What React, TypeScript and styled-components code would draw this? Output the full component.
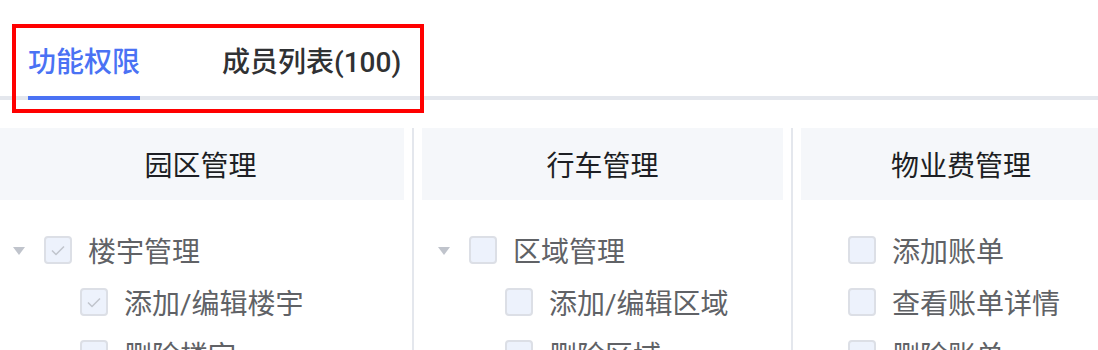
import React from "react";
import styled, { createGlobalStyle } from "styled-components";

const GlobalStyle = createGlobalStyle`
  body {
    margin: 0;
    background: #ffffff;
    font-family: Roboto, "Noto Sans CJK SC", "Noto Sans", sans-serif;
  }
`;

const StyledPage = styled.div`
  position: relative;
  width: 1098px;
  height: 350px;
  overflow: hidden;
`;

const StyledTabList = styled.div`
  display: flex;
  gap: 82px;
  padding-left: 28px;
  border-bottom: 4px solid #e4e7ed;
`;

const StyledTab = styled.div<{ $active?: boolean }>`
  display: flex;
  align-items: center;
  height: 72px;
  margin-top: 24px;
  margin-bottom: -4px;
  border-bottom: 4px solid ${({ $active }) => ($active ? "#4a72f4" : "transparent")};
  font-size: 28px;
  font-weight: 500;
  color: ${({ $active }) => ($active ? "#4a72f4" : "#303133")};
  white-space: nowrap;
`;

const StyledHighlight = styled.div`
  position: absolute;
  left: 12px;
  top: 24px;
  width: 412px;
  height: 89px;
  box-sizing: border-box;
  border: 4px solid #ff0000;
  pointer-events: none;
`;

const StyledColumns = styled.div`
  display: flex;
  margin-top: 28px;
  height: 222px;
`;

const StyledColumn = styled.div<{ $width: number; $offset?: number }>`
  flex: none;
  width: ${({ $width }) => $width}px;
  margin-left: ${({ $offset }) => $offset ?? 0}px;
`;

const StyledDivider = styled.div`
  flex: none;
  width: 2px;
  margin: 0 8px;
  background: #e4e7ed;
`;

const StyledHeader = styled.div`
  display: flex;
  align-items: center;
  justify-content: center;
  height: 72px;
  background: #f5f7fa;
  font-size: 28px;
  color: #1d1f24;
`;

const StyledTree = styled.div`
  padding-top: 24px;
`;

const StyledRow = styled.div<{ $level: number }>`
  display: flex;
  align-items: center;
  height: 52px;
  padding-left: ${({ $level }) => 16 + $level * 36}px;
  font-size: 28px;
  color: #606266;
  white-space: nowrap;
`;

const StyledCaret = styled.span<{ $leaf?: boolean }>`
  flex: none;
  width: 0;
  height: 0;
  margin-top: 2px;
  margin-right: 19px;
  border-left: 6.5px solid transparent;
  border-right: 6.5px solid transparent;
  border-top: 8px solid ${({ $leaf }) => ($leaf ? "transparent" : "#c0c4cc")};
`;

const StyledCheckbox = styled.span`
  flex: none;
  display: flex;
  align-items: center;
  justify-content: center;
  width: 28px;
  height: 28px;
  box-sizing: border-box;
  margin-right: 16px;
  border: 2px solid #dcdfe6;
  border-radius: 4px;
  background: #edf2fc;
`;

type Node = { label: string; level: number; checked: boolean; expandable?: boolean };

type Group = { title: string; width: number; offset?: number; nodes: Node[] };

const groups: Group[] = [
  {
    title: "园区管理",
    width: 407,
    offset: -3,
    nodes: [
      { label: "楼宇管理", level: 0, checked: true, expandable: true },
      { label: "添加/编辑楼宇", level: 1, checked: true },
      { label: "删除楼宇", level: 1, checked: true },
    ],
  },
  {
    title: "行车管理",
    width: 361,
    nodes: [
      { label: "区域管理", level: 0, checked: false, expandable: true },
      { label: "添加/编辑区域", level: 1, checked: false },
      { label: "删除区域", level: 1, checked: false },
    ],
  },
  {
    title: "物业费管理",
    width: 320,
    nodes: [
      { label: "添加账单", level: 0, checked: false },
      { label: "查看账单详情", level: 0, checked: false },
      { label: "删除账单", level: 0, checked: false },
    ],
  },
];

const CheckMark = () => (
  <svg width="18" height="18" viewBox="0 0 18 18" fill="none">
    <polyline points="3,9.5 7,13.5 15,5.5" stroke="#c0c4cc" strokeWidth="1.5" strokeLinejoin="round" />
  </svg>
);

export default function App() {
  return (
    <StyledPage>
      <GlobalStyle />
      <StyledTabList>
        <StyledTab $active>功能权限</StyledTab>
        <StyledTab>成员列表(100)</StyledTab>
      </StyledTabList>
      <StyledHighlight />
      <StyledColumns>
        {groups.map((group, i) => (
          <React.Fragment key={group.title}>
            {i > 0 && <StyledDivider />}
            <StyledColumn $width={group.width} $offset={group.offset}>
              <StyledHeader>{group.title}</StyledHeader>
              <StyledTree>
                {group.nodes.map((node) => (
                  <StyledRow key={node.label} $level={node.level}>
                    <StyledCaret $leaf={!node.expandable} />
                    <StyledCheckbox>{node.checked && <CheckMark />}</StyledCheckbox>
                    {node.label}
                  </StyledRow>
                ))}
              </StyledTree>
            </StyledColumn>
          </React.Fragment>
        ))}
      </StyledColumns>
    </StyledPage>
  );
}
